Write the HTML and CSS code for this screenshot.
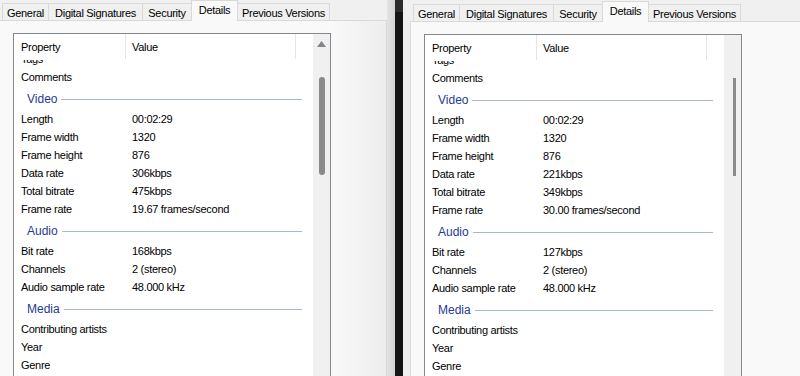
FILE: index.html
```html
<!DOCTYPE html>
<html lang="en">
<head>
    <meta charset="UTF-8">
    <title>Video Properties - Details</title>
    <link rel="stylesheet" href="styles.css">
</head>
<body>
    <div class="desktop">
        <!-- first properties dialog -->
        <section class="dialog dialog-left">
            <div class="tabs">
                <div class="tab tab-general">General</div>
                <div class="tab tab-signatures">Digital Signatures</div>
                <div class="tab tab-security">Security</div>
                <div class="tab tab-details active">Details</div>
                <div class="tab tab-versions">Previous Versions</div>
            </div>
            <div class="panel">
                <div class="listview">
                    <div class="list-main">
                        <div class="list-head">
                            <div class="col col-prop">Property</div>
                            <div class="col col-value">Value</div>
                            <div class="col col-rest"></div>
                        </div>
                        <div class="list-body">
                            <div class="list-scroll">
                                <div class="row"><span>Tags</span><span></span></div>
                                <div class="row"><span>Comments</span><span></span></div>
                                <div class="group">Video</div>
                                <div class="row"><span>Length</span><span>00:02:29</span></div>
                                <div class="row"><span>Frame width</span><span>1320</span></div>
                                <div class="row"><span>Frame height</span><span>876</span></div>
                                <div class="row"><span>Data rate</span><span>306kbps</span></div>
                                <div class="row"><span>Total bitrate</span><span>475kbps</span></div>
                                <div class="row"><span>Frame rate</span><span>19.67 frames/second</span></div>
                                <div class="group">Audio</div>
                                <div class="row"><span>Bit rate</span><span>168kbps</span></div>
                                <div class="row"><span>Channels</span><span>2 (stereo)</span></div>
                                <div class="row"><span>Audio sample rate</span><span>48.000 kHz</span></div>
                                <div class="group">Media</div>
                                <div class="row"><span>Contributing artists</span><span></span></div>
                                <div class="row"><span>Year</span><span></span></div>
                                <div class="row"><span>Genre</span><span></span></div>
                            </div>
                        </div>
                    </div>
                    <div class="scrollbar hovered">
                        <svg class="arrow" width="9" height="6" viewBox="0 0 9 6"><path d="M4.5 0 L9 6 L0 6 Z" fill="#858585"/></svg>
                        <span class="thumb"></span>
                    </div>
                </div>
            </div>
        </section>

        <div class="window-shadow"></div>
        <div class="window-gap"></div>

        <!-- second properties dialog -->
        <section class="dialog dialog-right">
            <div class="tabs">
                <div class="tab tab-general">General</div>
                <div class="tab tab-signatures">Digital Signatures</div>
                <div class="tab tab-security">Security</div>
                <div class="tab tab-details active">Details</div>
                <div class="tab tab-versions">Previous Versions</div>
            </div>
            <div class="panel">
                <div class="listview">
                    <div class="list-main">
                        <div class="list-head">
                            <div class="col col-prop">Property</div>
                            <div class="col col-value">Value</div>
                            <div class="col col-rest"></div>
                        </div>
                        <div class="list-body">
                            <div class="list-scroll">
                                <div class="row"><span>Tags</span><span></span></div>
                                <div class="row"><span>Comments</span><span></span></div>
                                <div class="group">Video</div>
                                <div class="row"><span>Length</span><span>00:02:29</span></div>
                                <div class="row"><span>Frame width</span><span>1320</span></div>
                                <div class="row"><span>Frame height</span><span>876</span></div>
                                <div class="row"><span>Data rate</span><span>221kbps</span></div>
                                <div class="row"><span>Total bitrate</span><span>349kbps</span></div>
                                <div class="row"><span>Frame rate</span><span>30.00 frames/second</span></div>
                                <div class="group">Audio</div>
                                <div class="row"><span>Bit rate</span><span>127kbps</span></div>
                                <div class="row"><span>Channels</span><span>2 (stereo)</span></div>
                                <div class="row"><span>Audio sample rate</span><span>48.000 kHz</span></div>
                                <div class="group">Media</div>
                                <div class="row"><span>Contributing artists</span><span></span></div>
                                <div class="row"><span>Year</span><span></span></div>
                                <div class="row"><span>Genre</span><span></span></div>
                            </div>
                        </div>
                    </div>
                    <div class="scrollbar">
                        <svg class="arrow" width="9" height="6" viewBox="0 0 9 6"><path d="M4.5 0 L9 6 L0 6 Z" fill="#858585"/></svg>
                        <span class="thumb"></span>
                    </div>
                </div>
            </div>
        </section>
    </div>
</body>
</html>
```

FILE: styles.css
```css
/* Base */
body {
    margin: 0;
    padding: 0;
    background-color: #f0f0f0;
    font-family: 'Liberation Sans', Arial, sans-serif;
    font-size: 11px;
    letter-spacing: -0.3px;
    color: #000;
}

.desktop {
    display: flex;
    height: 376px;
    overflow: hidden;
}

/* Dialog windows */
.dialog {
    display: flex;
    flex-direction: column;
    flex: none;
    background-color: #f0f0f0;
}

.dialog-left {
    width: 388px;
    margin-left: -1px;
}

.dialog-right {
    width: 400px;
    padding-left: 7px;
    padding-top: 1px;
}

.window-shadow {
    flex: none;
    width: 8px;
    background: linear-gradient(to right, #e3e3e3, #d4d4d4);
}

.window-gap {
    flex: none;
    width: 8px;
    background: linear-gradient(#2b2b2b 0, #2b2b2b 12px, #151515 12px);
}

/* Tabs */
.tabs {
    display: flex;
    align-items: flex-end;
    height: 21px;
    padding-left: 3px;
}

.tab {
    box-sizing: border-box;
    height: 17px;
    line-height: 18px;
    text-align: center;
    white-space: nowrap;
    background-color: #f0f0f0;
    border-top: 1px solid #d9d9d9;
    border-left: 1px solid #d9d9d9;
}

.tab-general { width: 46px; }
.tab-signatures { width: 94px; }
.tab-security { width: 49px; }
.tab-details { width: 47px; }
.tab-versions {
    width: 92px;
    border-right: 1px solid #d9d9d9;
}

.tab.active {
    position: relative;
    z-index: 1;
    height: 21px;
    line-height: 19px;
    margin-bottom: -1px;
    background-color: #f9f9f9;
    border-right: 1px solid #d9d9d9;
}

.tab.active + .tab {
    border-left: none;
}

/* Tab page */
.panel {
    flex: 1;
    padding: 12px 0 0 13px;
    border: 1px solid #d9d9d9;
    background-color: #f9f9f9;
}

.dialog-left .panel {
    background: linear-gradient(to right, #f9f9f9 0, #f9f9f9 330px, #ededed 100%);
}

/* List view */
.listview {
    display: flex;
    width: 318px;
    height: 400px;
    box-sizing: border-box;
    border: 1px solid #828790;
    background-color: #ffffff;
}

.list-main {
    flex: 1;
    display: flex;
    flex-direction: column;
    min-width: 0;
}

.list-head {
    display: flex;
    height: 26px;
    line-height: 27px;
    flex: none;
}

.col {
    box-sizing: border-box;
}

.col-prop {
    width: 112px;
    padding-left: 7px;
    border-right: 1px solid #e5e5e5;
    height: 25px;
}

.col-value {
    width: 170px;
    padding-left: 6px;
    border-right: 1px solid #e5e5e5;
    height: 25px;
}

.col-rest {
    flex: 1;
}

.list-body {
    flex: 1;
    overflow: hidden;
}

.list-scroll {
    margin-top: -10px;
}

.row {
    display: grid;
    grid-template-columns: 111px 1fr;
    height: 18px;
    line-height: 18px;
    padding-left: 7px;
    white-space: nowrap;
}

.group {
    display: flex;
    align-items: center;
    height: 24px;
    padding: 2px 11px 0 13px;
    box-sizing: border-box;
    font-size: 12px;
    letter-spacing: 0;
    color: #1f3a93;
}

.group::after {
    content: "";
    flex: 1;
    height: 1px;
    margin-left: 4px;
    background-color: #a8b5dc;
}

/* Scrollbar */
.scrollbar {
    flex: none;
    width: 17px;
    display: flex;
    flex-direction: column;
    align-items: center;
    padding-top: 7px;
    box-sizing: border-box;
    background-color: #f0f0f0;
}

.scrollbar .arrow {
    display: block;
    visibility: hidden;
}

.scrollbar .thumb {
    display: block;
    width: 3px;
    height: 98px;
    margin-top: 30px;
    margin-left: 3px;
    background-color: #8a8a8a;
}

.scrollbar.hovered .arrow {
    visibility: visible;
}

.scrollbar.hovered .thumb {
    width: 6px;
    margin-left: 0;
    border-radius: 3px;
}
```
